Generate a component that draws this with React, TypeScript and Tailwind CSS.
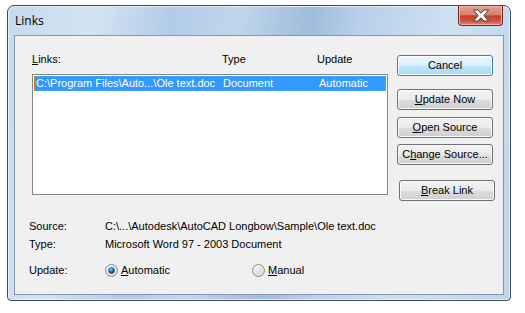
import React from "react";

const Btn = ({
  children,
  primary,
  className = "",
}: {
  children: React.ReactNode;
  primary?: boolean;
  className?: string;
}) => (
  <div
    className={`h-[21px] w-[96px] rounded-[3px] border flex items-center justify-center text-[11px] leading-none text-black ${
      primary
        ? "border-[#3c7fb1] bg-[linear-gradient(#eaf6fd_0%,#d9f0fc_50%,#bee6fd_51%,#a7d9f5_100%)] shadow-[inset_0_0_0_1px_#fcfdfe]"
        : "border-[#707070] bg-[linear-gradient(#f2f2f2_0%,#ebebeb_50%,#dddddd_51%,#cfcfcf_100%)] shadow-[inset_0_0_0_1px_#fafafa]"
    } ${className}`}
  >
    {children}
  </div>
);

const Radio = ({ checked }: { checked?: boolean }) => (
  <svg width="13" height="13" viewBox="0 0 13 13">
    <defs>
      <radialGradient id="rin" cx="0.35" cy="0.3" r="0.8">
        <stop offset="0" stopColor="#f4f4f4" />
        <stop offset="1" stopColor="#cbcbcb" />
      </radialGradient>
      <radialGradient id="rdot" cx="0.4" cy="0.3" r="0.7">
        <stop offset="0" stopColor="#8ad3f5" />
        <stop offset="0.6" stopColor="#1b6fa8" />
        <stop offset="1" stopColor="#0e3e65" />
      </radialGradient>
    </defs>
    <circle cx="6.5" cy="6.5" r="6" fill="url(#rin)" stroke="#8e8f8f" />
    <circle cx="6.5" cy="6.5" r="4.3" fill="none" stroke="#f8f8f8" strokeWidth="0.8" />
    {checked && <circle cx="6.5" cy="6.5" r="3" fill="url(#rdot)" stroke="#1c4c74" strokeWidth="0.6" />}
  </svg>
);

export default function App() {
  return (
    <div className="w-[525px] h-[313px] bg-white overflow-hidden font-['Liberation_Sans',Arial,sans-serif] text-[11px] text-black">
      <div className="ml-[7px] mt-[5px] w-[504px] h-[296px] border border-[#3d4a58] rounded-t-[7px] rounded-b-[4px] bg-[linear-gradient(100deg,#c6daee_0%,#d3e3f2_16%,#b2cce7_30%,#c0d6ec_42%,#9fbcdb_55%,#b8d0ea_64%,#cfe0f1_80%,#bed4ec_100%)] flex flex-col shadow-[inset_0_0_0_1px_#e4eef8]">
        {/* title bar */}
        <div className="h-[29px] relative flex items-start">
          <span className="ml-[7px] mt-[8px] text-[12px] leading-[14px] font-['Open_Sans',sans-serif] text-black">
            Links
          </span>
          <div className="absolute right-[7px] top-0 w-[45px] h-[20px] rounded-b-[4px] border border-t-0 border-[#6d2a22] bg-[linear-gradient(#e6a193_0%,#d8806f_45%,#c33f2b_52%,#cc5440_80%,#df917a_100%)] flex items-center justify-center shadow-[inset_0_0_0_1px_#eeb3a6]">
            <svg width="18" height="13" viewBox="0 0 18 13">
              <path
                d="M1.5 1h4.5L9 4.2 12 1h4.5l-4.6 5.5 4.6 5.5H12L9 8.8 6 12H1.5l4.6-5.5z"
                fill="#ffffff"
                stroke="#4d3c3c"
                strokeWidth="1"
                strokeLinejoin="round"
              />
            </svg>
          </div>
        </div>

        {/* client area */}
        <div className="mx-[6px] h-[260px] border border-[#8397b0] bg-[#f0f0f0]">
          <div className="flex items-start">
            {/* left column */}
            <div className="ml-[17px] pt-[16px] w-[356px]">
              <div className="h-[14px] leading-[14px] relative">
                <span>
                  <u>L</u>inks:
                </span>
                <span className="absolute left-[190px] top-0">Type</span>
                <span className="absolute left-[285px] top-0">Update</span>
              </div>
              <div className="mt-[8px] h-[121px] border border-[#828790] bg-white p-[1px]">
                <div className="h-[15px] bg-[#3399ff] border border-dotted border-[#e0872d] text-white leading-[13px] relative">
                  <span className="absolute left-[1px] top-0">C:\Program Files\Auto...\Ole text.doc</span>
                  <span className="absolute left-[188px] top-0">Document</span>
                  <span className="absolute left-[284px] top-0">Automatic</span>
                </div>
              </div>
            </div>

            {/* right column */}
            <div className="ml-[9px] pt-[19px] flex flex-col">
              <Btn primary>Cancel</Btn>
              <Btn className="mt-[13px]">
                <span>
                  <u>U</u>pdate Now
                </span>
              </Btn>
              <Btn className="mt-[7px]">
                <span>
                  <u>O</u>pen Source
                </span>
              </Btn>
              <Btn className="mt-[6px]">
                <span>
                  C<u>h</u>ange Source...
                </span>
              </Btn>
              <Btn className="mt-[15px] ml-[2px]">
                <span>
                  <u>B</u>reak Link
                </span>
              </Btn>
            </div>
          </div>

          {/* details */}
          <div className="ml-[14px] mt-[18px] flex flex-col">
            <div className="h-[14px] leading-[14px] flex">
              <span className="w-[76px]">Source:</span>
              <span>C:\...\Autodesk\AutoCAD Longbow\Sample\Ole text.doc</span>
            </div>
            <div className="mt-[4px] h-[14px] leading-[14px] flex">
              <span className="w-[76px]">Type:</span>
              <span>Microsoft Word 97 - 2003 Document</span>
            </div>
            <div className="mt-[12px] h-[14px] leading-[14px] flex items-center">
              <span className="w-[76px]">Update:</span>
              <div className="w-[147px] flex items-center">
                <Radio checked />
                <span className="ml-[3px]">
                  <u>A</u>utomatic
                </span>
              </div>
              <div className="flex items-center">
                <Radio />
                <span className="ml-[3px]">
                  <u>M</u>anual
                </span>
              </div>
            </div>
          </div>
        </div>
      </div>
    </div>
  );
}
